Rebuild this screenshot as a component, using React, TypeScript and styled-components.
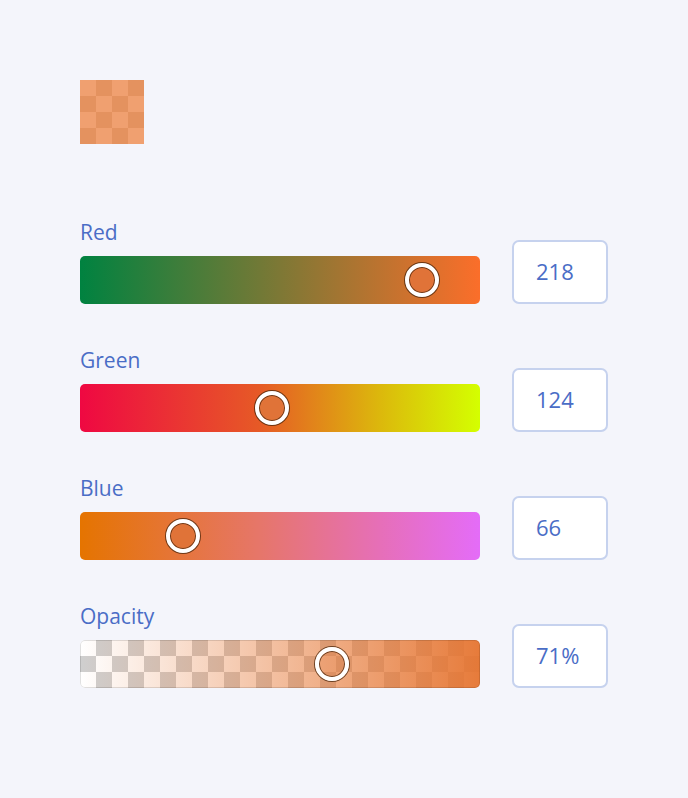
import React from 'react';
import styled, { createGlobalStyle } from 'styled-components';

const GlobalStyle = createGlobalStyle`
  html, body {
    margin: 0;
    padding: 0;
    background: #f4f5fb;
    font-family: "Open Sans", "Noto Sans", sans-serif;
  }
`;

const Page = styled.div`
  width: 688px;
  min-height: 798px;
  box-sizing: border-box;
  padding: 80px 80px 0;
  background: #f4f5fb;
`;

const Swatch = styled.div`
  width: 64px;
  height: 64px;
  background: conic-gradient(#e4925f 0 25%, #f0a070 0 50%, #e4925f 0 75%, #f0a070 0) 0 0 / 32px 32px;
  margin-bottom: 76px;
`;

const Sliders = styled.div`
  display: flex;
  flex-direction: column;
  gap: 44px;
`;

const Row = styled.div`
  display: grid;
  grid-template-columns: 400px 96px;
  grid-template-rows: 24px 48px;
  column-gap: 32px;
  row-gap: 12px;
`;

const Label = styled.div`
  grid-column: 1;
  grid-row: 1;
  font-size: 21px;
  line-height: 24px;
  color: #4a6dc6;
`;

const Track = styled.div<{ $bg: string; $checker?: boolean }>`
  grid-column: 1;
  grid-row: 2;
  position: relative;
  border-radius: 5px;
  background: ${p =>
    p.$checker
      ? `${p.$bg}, conic-gradient(#cfcfcf 0 25%, #ffffff 0 50%, #cfcfcf 0 75%, #ffffff 0) 0 0 / 32px 32px`
      : p.$bg};
  box-shadow: ${p => (p.$checker ? 'inset 0 0 0 1px rgba(0, 0, 0, 0.12)' : 'none')};
`;

const Thumb = styled.div<{ $fill: string }>`
  position: absolute;
  top: 50%;
  width: 26px;
  height: 26px;
  margin: -17px 0 0 -17px;
  border-radius: 50%;
  border: 4px solid #fff;
  background: ${p => p.$fill};
  box-shadow: 0 0 0 1px rgba(70, 35, 10, 0.75), inset 0 0 0 1px rgba(70, 35, 10, 0.75);
`;

const ValueBox = styled.div`
  grid-column: 2;
  grid-row: 1 / span 2;
  align-self: end;
  height: 64px;
  box-sizing: border-box;
  border: 2px solid #c6d2ee;
  border-radius: 7px;
  background: #fff;
  display: flex;
  align-items: center;
  padding: 0 0 2px 22px;
  font-size: 22px;
  color: #4a6dc6;
`;

type Channel = {
  label: string;
  value: string;
  pos: number;
  bg: string;
  fill: string;
  checker?: boolean;
};

const channels: Channel[] = [
  {
    label: 'Red',
    value: '218',
    pos: 342,
    bg: 'linear-gradient(to right, #008240, #fb6e2a)',
    fill: '#e07338',
  },
  {
    label: 'Green',
    value: '124',
    pos: 192,
    bg: 'linear-gradient(to right, #ef0842, #e65a26 45%, #dcb80c 75%, #d4ff00)',
    fill: '#e07338',
  },
  {
    label: 'Blue',
    value: '66',
    pos: 103,
    bg: 'linear-gradient(to right, #e57400, #e6766a 45%, #e66fb8 75%, #e46cf8)',
    fill: '#e07338',
  },
  {
    label: 'Opacity',
    value: '71%',
    pos: 252,
    bg: 'linear-gradient(to right, rgba(229, 116, 48, 0), rgba(229, 116, 48, 0.95))',
    fill: 'rgba(224, 120, 60, 0.25)',
    checker: true,
  },
];

export default function App() {
  return (
    <>
      <GlobalStyle />
      <Page>
        <Swatch />
        <Sliders>
          {channels.map(c => (
            <Row key={c.label}>
              <Label>{c.label}</Label>
              <Track $bg={c.bg} $checker={c.checker}>
                <Thumb $fill={c.fill} style={{ left: c.pos }} />
              </Track>
              <ValueBox>{c.value}</ValueBox>
            </Row>
          ))}
        </Sliders>
      </Page>
    </>
  );
}
